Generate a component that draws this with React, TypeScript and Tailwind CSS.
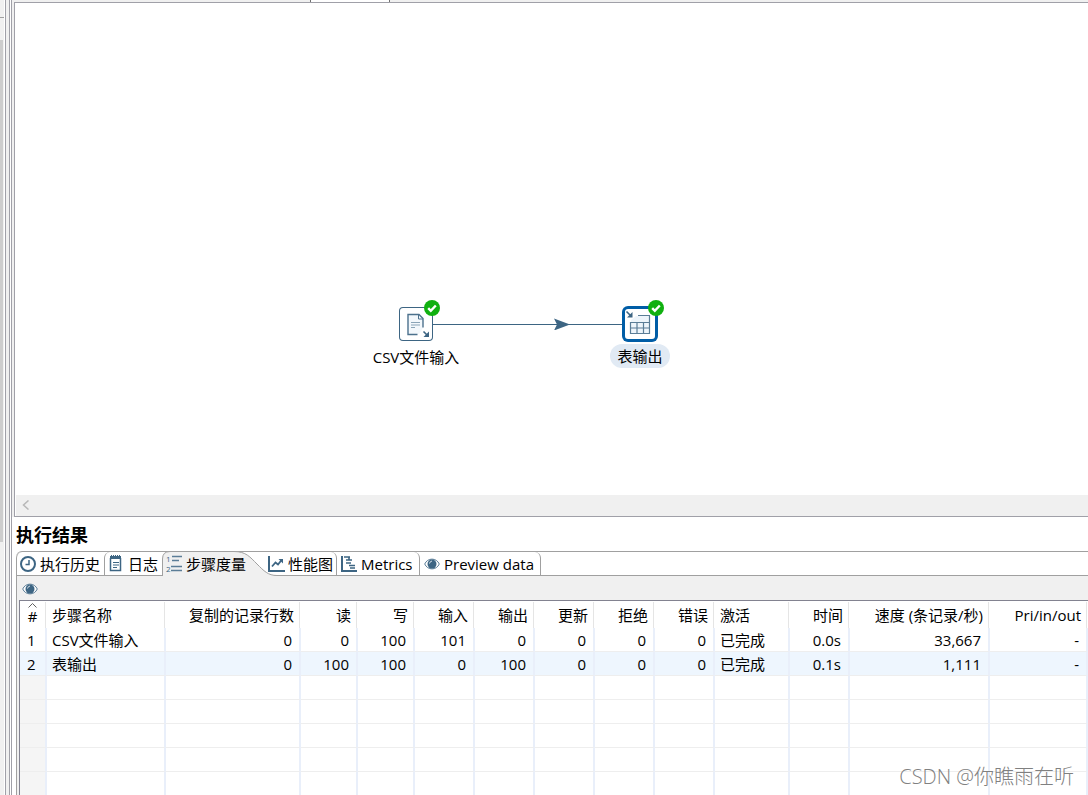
import { useState } from 'react'
import type { ReactNode } from 'react'

type Align = 'left' | 'right'

interface Column {
  label: string
  width: string
  align: Align
}

const columns: Column[] = [
  { label: '步骤名称', width: 'w-[119px]', align: 'left' },
  { label: '复制的记录行数', width: 'w-[135px]', align: 'right' },
  { label: '读', width: 'w-[57px]', align: 'right' },
  { label: '写', width: 'w-[57px]', align: 'right' },
  { label: '输入', width: 'w-[60px]', align: 'right' },
  { label: '输出', width: 'w-[60px]', align: 'right' },
  { label: '更新', width: 'w-[60px]', align: 'right' },
  { label: '拒绝', width: 'w-[60px]', align: 'right' },
  { label: '错误', width: 'w-[60px]', align: 'right' },
  { label: '激活', width: 'w-[75px]', align: 'left' },
  { label: '时间', width: 'w-[60px]', align: 'right' },
  { label: '速度 (条记录/秒)', width: 'w-[140px]', align: 'right' },
  { label: 'Pri/in/out', width: 'w-auto', align: 'right' },
]

const rows = [
  ['CSV文件输入', '0', '0', '100', '101', '0', '0', '0', '0', '已完成', '0.0s', '33,667', '-'],
  ['表输出', '0', '100', '100', '0', '100', '0', '0', '0', '已完成', '0.1s', '1,111', '-'],
]

const emptyRows = [3, 4, 5, 6, 7]

function ClockIcon() {
  return (
    <svg width="16" height="16" viewBox="0 0 16 16" fill="none" stroke="#3d6583" strokeWidth="2">
      <circle cx="8" cy="8" r="7" />
      <path d="M9 4v4.5H5.5" strokeWidth="1.5" />
    </svg>
  )
}

function LogIcon() {
  return (
    <svg width="14" height="17" viewBox="0 0 14 17" fill="none" stroke="#3d6583">
      <path d="M1.5 3v12.5h10V3" strokeWidth="1.5" />
      <path d="M1 2.5h11" strokeWidth="3" />
      <path d="M2.5 0v3M4.5 0v3M6.5 0v3M8.5 0v3M10.5 0v3" />
      <path d="M4 7.5h6M4 10h6M4 12.5h4" />
    </svg>
  )
}

function StepsIcon() {
  return (
    <svg className="overflow-visible" width="17" height="17" viewBox="0 0 17 17">
      <text x="0" y="7" fontSize="8" fill="#3d6583" fontFamily="Open Sans">1</text>
      <text x="0" y="17" fontSize="8" fill="#3d6583" fontFamily="Open Sans">2</text>
      <path d="M6 1.5h10M6 5.5h7M5 11.5h11M5 15.5h11" stroke="#5b7d97" strokeWidth="1.4" />
    </svg>
  )
}

function ChartIcon() {
  return (
    <svg width="17" height="16" viewBox="0 0 17 16" fill="none" stroke="#3d6583">
      <path d="M1 0v15h16" strokeWidth="2" />
      <path d="M4 10.5l3.5-4 2.5 2 4-5" strokeWidth="1.8" />
      <path d="M10.5 3h4.5v4.5z" fill="#3d6583" stroke="none" />
    </svg>
  )
}

function MetricsIcon() {
  return (
    <svg width="16" height="16" viewBox="0 0 16 16" fill="none" stroke="#3d6583" strokeWidth="2">
      <path d="M1 0v15h15" />
      <path d="M3 1h6M5 4h6M5 7h5M8 9.5h6M9 12h5" strokeWidth="1.6" />
      <path d="M8 1v3" strokeWidth="1.6" />
    </svg>
  )
}

function EyeIcon() {
  return (
    <svg width="16" height="12" viewBox="0 0 16 12" fill="none">
      <path d="M.7 6C3.5-.5 12.5-.5 15.3 6 12.5 12.5 3.5 12.5.7 6z" fill="#fff" stroke="#5b7d97" />
      <circle cx="8" cy="6" r="4.5" fill="#3d6583" />
      <path d="M8 3A3 3 0 0 0 5.500 5.500" stroke="#d5e0e8" />
    </svg>
  )
}

function CheckBadge() {
  return (
    <svg width="16" height="16" viewBox="0 0 16 16">
      <circle cx="8" cy="8" r="8" fill="#10b010" />
      <path d="M4.2 8.2l2.6 2.6 5-5.3" fill="none" stroke="#fff" strokeWidth="2.4" />
    </svg>
  )
}

function CsvIcon() {
  return (
    <svg width="32" height="32" viewBox="0 0 32 32" fill="none">
      <path d="M8 6.5h11l4 4V20l-4 6H8z" fill="#f3f8fc" />
      <path d="M17.500 26.500h-9.500v-20h11l4 4v9" stroke="#4c718d" strokeWidth="1.4" />
      <path d="M18.500 6.500v4.500h4.500" stroke="#4c718d" />
      <path d="M11 14.500h9M11 17h9M11 19.500h4" stroke="#8ba5b8" />
      <path d="M23.500 23.500l4.500 4.500" stroke="#3d6583" strokeWidth="1.6" />
      <path d="M29 23.500V29h-5.500z" fill="#3d6583" />
    </svg>
  )
}

function TableOutputIcon() {
  return (
    <svg width="32" height="30" viewBox="0 0 32 30" fill="none">
      <path d="M7 11l5-4h14v17H6z" fill="#eef5fb" />
      <path d="M14 6.500h11.500v18h-19v-11h19M6.500 19h19M13 13.500v11M19.500 13.500v11" stroke="#5b7d97" strokeWidth="1.2" />
      <path d="M2.500 2.500L7 7" stroke="#3d6583" strokeWidth="1.6" />
      <path d="M8.500 3V8.500H3z" fill="#3d6583" />
    </svg>
  )
}

interface ResultTab {
  id: string
  label: string
  icon: ReactNode
  shape: string
}

const tabs: ResultTab[] = [
  { id: 'history', label: '执行历史', icon: <ClockIcon />, shape: 'w-[88px] rounded-tl-md border-l pl-[3px] gap-1' },
  { id: 'log', label: '日志', icon: <LogIcon />, shape: 'w-[58px] rounded-tl-md border-l pl-1 gap-[5px]' },
  { id: 'steps', label: '步骤度量', icon: <StepsIcon />, shape: 'w-[105px] pl-1 gap-[3px]' },
  { id: 'perf', label: '性能图', icon: <ChartIcon />, shape: 'w-[70px] rounded-tr-md border-r pl-px gap-[3px]' },
  { id: 'metrics', label: 'Metrics', icon: <MetricsIcon />, shape: 'w-[83px] rounded-tr-md border-r pl-1 gap-1' },
  { id: 'preview', label: 'Preview data', icon: <EyeIcon />, shape: 'w-[121px] rounded-tr-md border-r pl-1 gap-1' },
]

function LeftSashes() {
  return (
    <div className="flex w-3 shrink-0 bg-[#f0f0f0]">
      <div className="flex w-[5px] flex-col border-r border-white">
        <div className="h-[18px] border-b border-[#a0a0a0]" />
        <div className="mt-[22px] mr-px h-[502px] bg-[#cdcdcd]" />
      </div>
      <div className="w-[5px] border-x border-[#a0a0a8]" />
      <div className="w-px bg-white" />
      <div className="w-px bg-[#a0a0a8]" />
    </div>
  )
}

function Canvas() {
  return (
    <div className="flex min-h-0 flex-1 flex-col bg-[#f0f0f0] pl-0.5">
      <div className="flex h-0.5 shrink-0">
        <div className="ml-[296px] w-20 border-x border-[#707070] bg-white" />
      </div>
      <div className="flex min-h-0 flex-1 flex-col border-y border-l border-[#a0a0a8] bg-white">
        <div className="relative min-h-0 flex-1 overflow-hidden">
          {/* hop between the two steps */}
          <svg className="absolute top-[315px] left-[418px]" width="190" height="12" viewBox="0 0 190 12">
            <path d="M0 6.5h190" stroke="#3d6583" />
            <path d="M121 .5l16 6-16 6 3-6z" fill="#3d6583" />
          </svg>
          <div className="absolute top-[304px] left-[351px] flex w-[100px] flex-col items-center">
            <div className="relative flex size-[34px] items-center justify-center rounded bg-white ring-1 ring-[#3d6583] ring-inset">
              <CsvIcon />
              <span className="absolute -top-[7px] -right-[7px]">
                <CheckBadge />
              </span>
            </div>
            <span className="mt-1 leading-6">CSV文件输入</span>
          </div>
          <div className="absolute top-[303px] left-[595px] flex w-[60px] flex-col items-center">
            <div className="relative flex size-9 items-center justify-center rounded-md bg-white ring-3 ring-[#005da6] ring-inset">
              <TableOutputIcon />
              <span className="absolute -top-1.5 -right-1.5">
                <CheckBadge />
              </span>
            </div>
            <span className="mt-0.5 w-full rounded-full bg-[#e1eaf4] text-center leading-6">表输出</span>
          </div>
        </div>
        <div className="ml-px flex h-[21px] shrink-0 items-center bg-[#f0f0f0]">
          <button aria-label="向左滚动" className="pb-0.5 pl-1.5">
            <svg width="8" height="10" viewBox="0 0 8 10" fill="none" stroke="#b8b8b8" strokeWidth="1.5">
              <path d="M6.500.5L1.500 5l5 4.500" />
            </svg>
          </button>
        </div>
      </div>
    </div>
  )
}

function TabBar({ active, onChange }: { active: string; onChange: (id: string) => void }) {
  return (
    <div className="flex h-[25px] rounded-tl-md border-y border-[#a0a0a0] bg-white">
      {tabs.map((tab) => (
        <button
          key={tab.id}
          onClick={() => onChange(tab.id)}
          className={`relative flex h-[23px] shrink-0 items-center border-[#a0a0a0] whitespace-nowrap ${tab.shape}`}
        >
          {active === tab.id && (
            <svg className="absolute -top-px left-0" width="116" height="25" viewBox="0 0 116 25">
              <path
                d="M.5 25V8Q.5 .5 8 .5H72C84 .5 88 6 95 13S106 24.500 115 24.500V25z"
                fill="#f0f0f0"
              />
              <path
                d="M.5 25V8Q.5 .5 8 .5H72C84 .5 88 6 95 13S106 24.500 115 24.500"
                fill="none"
                stroke="#a0a0a0"
              />
            </svg>
          )}
          <span className="relative">{tab.icon}</span>
          <span className="relative leading-5">{tab.label}</span>
        </button>
      ))}
    </div>
  )
}

function MetricsTable() {
  return (
    <table className="w-full table-fixed border-separate border-spacing-0 bg-white">
      <thead>
        <tr className="h-[27px]">
          <th className="w-[27px] p-0 font-normal">
            <div className="mr-px flex h-[26px] flex-col items-center border-r border-[#e5e5e5] pt-px">
              <svg width="9" height="5" viewBox="0 0 9 5" fill="none" stroke="#606060">
                <path d="M.5 4.500l4-4 4 4" />
              </svg>
              <span className="leading-4">#</span>
            </div>
          </th>
          {columns.map((col) => (
            <th key={col.label} className={`p-0 font-normal whitespace-nowrap ${col.width}`}>
              <div
                className={`mr-px h-[26px] border-r border-[#e5e5e5] leading-[27px] ${
                  col.align === 'right' ? 'pr-[5px] text-right' : 'pl-[5px] text-left'
                }`}
              >
                {col.label}
              </div>
            </th>
          ))}
        </tr>
      </thead>
      <tbody>
        {rows.map((row, i) => (
          <tr key={row[0]} className={`h-6 ${i % 2 ? 'bg-[#eef6fe]' : 'bg-white'}`}>
            <td className="border-r-2 border-b border-r-[#e9effa] border-b-[#eeeeee] p-0 pt-0.5 pl-[7px] leading-[21px]">
              {i + 1}
            </td>
            {row.map((value, c) => (
              <td
                key={columns[c].label}
                className={`border-r-2 border-b border-r-[#e9effa] border-b-[#eeeeee] p-0 pt-0.5 leading-[21px] whitespace-nowrap ${
                  columns[c].align === 'right' ? 'pr-[7px] text-right' : 'pl-[5px] text-left'
                }`}
              >
                {value}
              </td>
            ))}
          </tr>
        ))}
        {emptyRows.map((n) => (
          <tr key={n} className="h-6">
            <td className="border-r-2 border-b border-r-[#e9effa] border-b-[#eeeeee] bg-[#f5f5f5] p-0" />
            {columns.map((col) => (
              <td key={col.label} className="border-r-2 border-b border-r-[#e9effa] border-b-[#eeeeee] p-0" />
            ))}
          </tr>
        ))}
      </tbody>
    </table>
  )
}

export default function App() {
  const [active, setActive] = useState('steps')

  return (
    <div className="relative flex h-screen overflow-hidden bg-white font-['Open_Sans','Noto_Sans_CJK_SC',sans-serif] text-[15px] text-black">
      <LeftSashes />
      <main className="flex min-w-0 flex-1 flex-col">
        <Canvas />
        <section className="flex h-[278px] shrink-0 flex-col pl-1">
          <h2 className="h-[34px] text-lg leading-9 font-bold">执行结果</h2>
          <TabBar active={active} onChange={setActive} />
          <div className="flex min-h-0 flex-1 flex-col border-l border-[#a0a0a0] bg-[#f0f0f0] pl-0.5">
            <div className="flex h-6 shrink-0 items-center pt-0.5 pl-[3px]">
              <button aria-label="预览">
                <EyeIcon />
              </button>
            </div>
            <div className="min-h-0 flex-1 overflow-hidden border-t border-l border-[#828290] bg-white">
              <MetricsTable />
            </div>
          </div>
        </section>
      </main>
      <div className="absolute right-[14px] bottom-1 text-xl leading-7 font-light text-[#808080]">CSDN @你瞧雨在听</div>
    </div>
  )
}
